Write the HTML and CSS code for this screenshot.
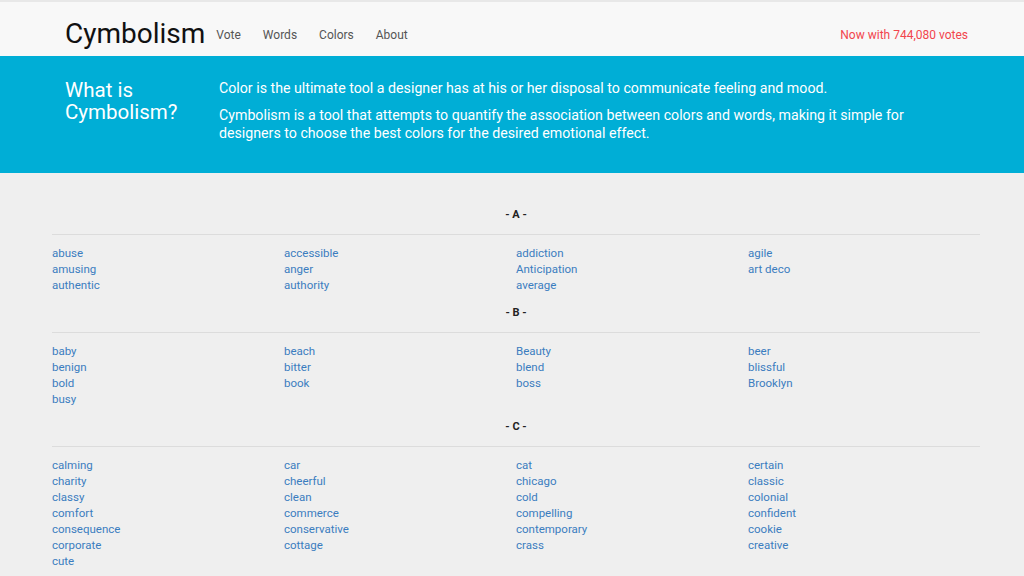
FILE: index.html
```html
<!DOCTYPE html>
<html lang="en">
<head>
    <meta charset="UTF-8">
    <meta name="viewport" content="width=device-width, initial-scale=1.0">
    <title>Cymbolism</title>
    <link rel="stylesheet" href="styles.css">
</head>
<body>
    <header class="topbar">
        <div class="topbar-inner">
            <a class="brand" href="#">Cymbolism</a>
            <nav class="nav">
                <a href="#">Vote</a>
                <a href="#">Words</a>
                <a href="#">Colors</a>
                <a href="#">About</a>
            </nav>
            <div class="votes">Now with 744,080 votes</div>
        </div>
    </header>

    <section class="intro">
        <h2 class="intro-title">What is<br>Cymbolism?</h2>
        <div class="intro-text">
            <p>Color is the ultimate tool a designer has at his or her disposal to communicate feeling and mood.</p>
            <p>Cymbolism is a tool that attempts to quantify the association between colors and words, making it simple for designers to choose the best colors for the desired emotional effect.</p>
        </div>
    </section>

    <main class="words">
        <div class="letter">
            <h3>- A -</h3>
            <div class="word-grid">
                <ul>
                    <li><a href="#">abuse</a></li>
                    <li><a href="#">amusing</a></li>
                    <li><a href="#">authentic</a></li>
                </ul>
                <ul>
                    <li><a href="#">accessible</a></li>
                    <li><a href="#">anger</a></li>
                    <li><a href="#">authority</a></li>
                </ul>
                <ul>
                    <li><a href="#">addiction</a></li>
                    <li><a href="#">Anticipation</a></li>
                    <li><a href="#">average</a></li>
                </ul>
                <ul>
                    <li><a href="#">agile</a></li>
                    <li><a href="#">art deco</a></li>
                </ul>
            </div>
        </div>

        <div class="letter">
            <h3>- B -</h3>
            <div class="word-grid">
                <ul>
                    <li><a href="#">baby</a></li>
                    <li><a href="#">benign</a></li>
                    <li><a href="#">bold</a></li>
                    <li><a href="#">busy</a></li>
                </ul>
                <ul>
                    <li><a href="#">beach</a></li>
                    <li><a href="#">bitter</a></li>
                    <li><a href="#">book</a></li>
                </ul>
                <ul>
                    <li><a href="#">Beauty</a></li>
                    <li><a href="#">blend</a></li>
                    <li><a href="#">boss</a></li>
                </ul>
                <ul>
                    <li><a href="#">beer</a></li>
                    <li><a href="#">blissful</a></li>
                    <li><a href="#">Brooklyn</a></li>
                </ul>
            </div>
        </div>

        <div class="letter">
            <h3>- C -</h3>
            <div class="word-grid">
                <ul>
                    <li><a href="#">calming</a></li>
                    <li><a href="#">charity</a></li>
                    <li><a href="#">classy</a></li>
                    <li><a href="#">comfort</a></li>
                    <li><a href="#">consequence</a></li>
                    <li><a href="#">corporate</a></li>
                    <li><a href="#">cute</a></li>
                </ul>
                <ul>
                    <li><a href="#">car</a></li>
                    <li><a href="#">cheerful</a></li>
                    <li><a href="#">clean</a></li>
                    <li><a href="#">commerce</a></li>
                    <li><a href="#">conservative</a></li>
                    <li><a href="#">cottage</a></li>
                </ul>
                <ul>
                    <li><a href="#">cat</a></li>
                    <li><a href="#">chicago</a></li>
                    <li><a href="#">cold</a></li>
                    <li><a href="#">compelling</a></li>
                    <li><a href="#">contemporary</a></li>
                    <li><a href="#">crass</a></li>
                </ul>
                <ul>
                    <li><a href="#">certain</a></li>
                    <li><a href="#">classic</a></li>
                    <li><a href="#">colonial</a></li>
                    <li><a href="#">confident</a></li>
                    <li><a href="#">cookie</a></li>
                    <li><a href="#">creative</a></li>
                </ul>
            </div>
        </div>
    </main>
</body>
</html>
```

FILE: styles.css
```css
body {
    margin: 0;
    font-family: Roboto, "Liberation Sans", sans-serif;
    background: #efefef;
    color: #333;
}
a {
    text-decoration: none;
}
.topbar {
    background: #f8f8f8;
    border-top: 2px solid #e8e8e8;
    height: 54px;
}
.topbar-inner {
    display: flex;
    align-items: center;
    height: 100%;
    padding: 0 56px 0 65px;
}
.brand {
    font-size: 28px;
    color: #111;
    margin-right: 11px;
    padding-top: 8px;
}
.nav {
    display: flex;
    gap: 22px;
    padding-top: 11px;
}
.nav a {
    font-size: 12px;
    color: #555;
}
.votes {
    margin-left: auto;
    font-size: 12px;
    color: #f2454d;
    padding-top: 11px;
}
.intro {
    background: #00aed6;
    color: #fff;
    display: flex;
    height: 117px;
    padding: 0 0 0 65px;
    box-sizing: border-box;
}
.intro-title {
    font-weight: normal;
    font-size: 20.5px;
    line-height: 22px;
    margin: 23px 0 0;
    width: 154px;
}
.intro-text {
    padding-top: 23px;
    width: 700px;
}
.intro-text p {
    margin: 0 0 9px;
    font-size: 14.2px;
    line-height: 18px;
}
.words {
    width: 928px;
    margin: 0 0 0 52px;
    padding-top: 34px;
}
.letter h3 {
    text-align: center;
    font-size: 11px;
    line-height: 16px;
    margin: 0;
    padding-bottom: 11px;
    border-bottom: 1px solid #dcdcdc;
    color: #222;
}
.word-grid {
    display: grid;
    grid-template-columns: repeat(4, 1fr);
    padding: 10px 0 12px;
}
.word-grid ul {
    list-style: none;
    margin: 0;
    padding: 0;
}
.word-grid li {
    font-size: 11.5px;
    line-height: 16px;
}
.word-grid a {
    color: #3b7dbf;
}
```
